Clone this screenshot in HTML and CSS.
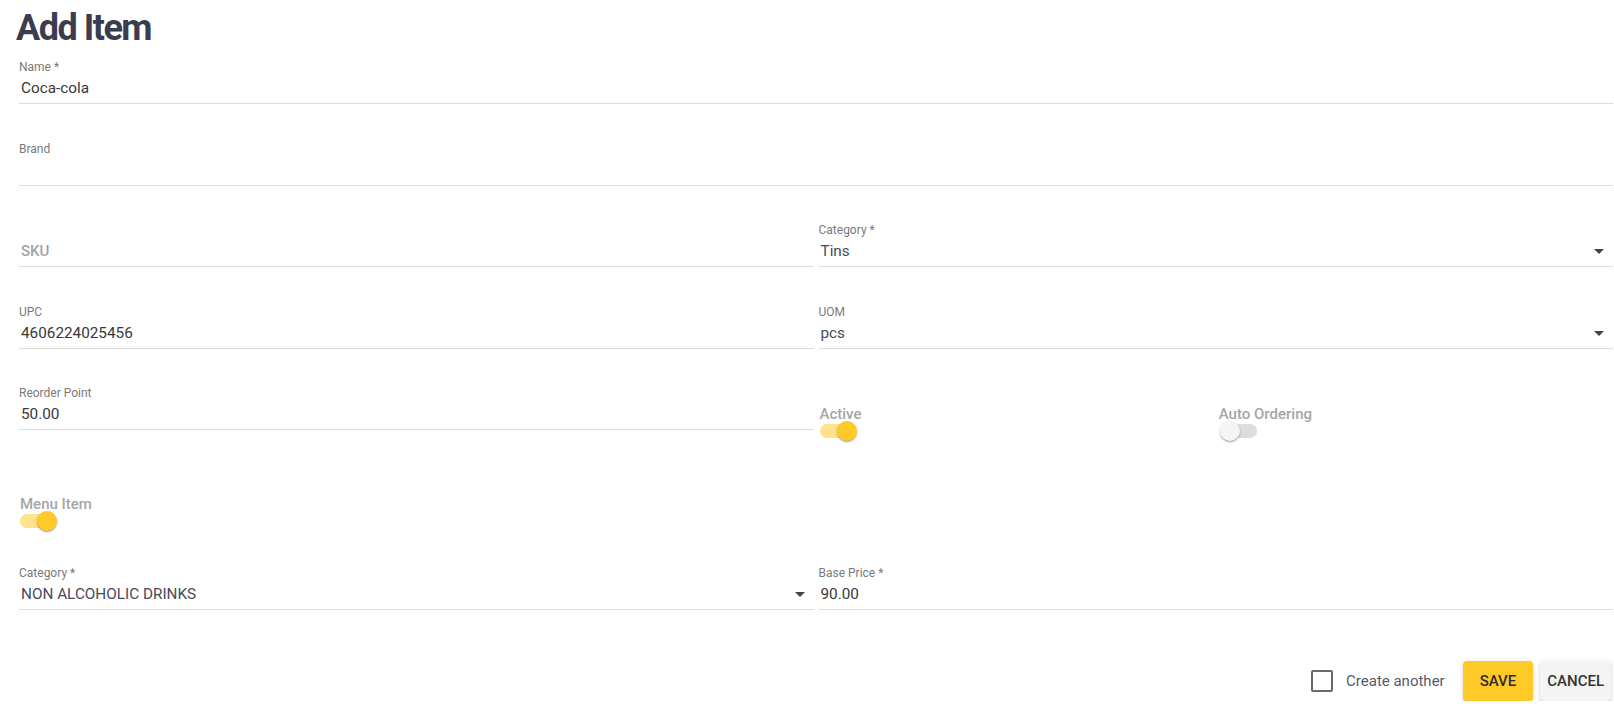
FILE: index.html
```html
<!DOCTYPE html>
<html lang="en">
<head>
<meta charset="utf-8">
<title>Add Item</title>
<link rel="stylesheet" href="styles.css">
</head>
<body>
<div class="page">
  <h1 class="title">Add Item</h1>
  <form class="form">
    <div class="field">
      <label class="label">Name *</label>
      <div class="value">Coca-cola</div>
    </div>
    <div class="field">
      <label class="label">Brand</label>
      <div class="value"></div>
    </div>
    <div class="row-2">
      <div class="field field--empty">
        <div class="value"><label class="placeholder">SKU</label></div>
      </div>
      <div class="field">
        <label class="label">Category *</label>
        <div class="value value--select"><span>Tins</span>
          <svg class="caret" viewBox="0 0 24 24" width="24" height="24"><path d="M7 10l5 5 5-5z"/></svg>
        </div>
      </div>
    </div>
    <div class="row-2">
      <div class="field">
        <label class="label">UPC</label>
        <div class="value">4606224025456</div>
      </div>
      <div class="field">
        <label class="label">UOM</label>
        <div class="value value--select"><span>pcs</span>
          <svg class="caret" viewBox="0 0 24 24" width="24" height="24"><path d="M7 10l5 5 5-5z"/></svg>
        </div>
      </div>
    </div>
    <div class="row-2">
      <div class="field">
        <label class="label">Reorder Point</label>
        <div class="value">50.00</div>
      </div>
      <div class="switch-pair">
        <div class="switch-group">
          <div class="switch-label">Active</div>
          <div class="switch on"><span class="thumb"></span></div>
        </div>
        <div class="switch-group switch-group--second">
          <div class="switch-label">Auto Ordering</div>
          <div class="switch"><span class="thumb"></span></div>
        </div>
      </div>
    </div>
    <div class="switch-row">
      <div class="switch-group">
        <div class="switch-label">Menu Item</div>
        <div class="switch on"><span class="thumb"></span></div>
      </div>
    </div>
    <div class="row-2">
      <div class="field">
        <label class="label">Category *</label>
        <div class="value value--select"><span>NON ALCOHOLIC DRINKS</span>
          <svg class="caret" viewBox="0 0 24 24" width="24" height="24"><path d="M7 10l5 5 5-5z"/></svg>
        </div>
      </div>
      <div class="field">
        <label class="label">Base Price *</label>
        <div class="value">90.00</div>
      </div>
    </div>
    <div class="actions">
      <label class="check"><span class="box"></span><span>Create another</span></label>
      <button type="button" class="btn btn-save">Save</button>
      <button type="button" class="btn btn-cancel">Cancel</button>
    </div>
  </form>
</div>
</body>
</html>
```

FILE: styles.css
```css
* { box-sizing: border-box; }

body {
  margin: 0;
  background: #ffffff;
  font-family: Roboto, "Noto Sans", "Liberation Sans", sans-serif;
}

.page {
  padding: 7px 1px 0 19px;
}

.title {
  margin: 0 0 11px -3px;
  font-size: 36px;
  line-height: 42px;
  font-weight: 700;
  letter-spacing: -1.5px;
  color: #3a3d4f;
}

.form {
  display: flex;
  flex-direction: column;
  gap: 37.5px;
}

.row-2 {
  display: grid;
  grid-template-columns: 1fr 1fr;
  column-gap: 5px;
  align-items: start;
}

.field {
  border-bottom: 1px solid #dcdcdc;
}

.field--empty {
  padding-top: 14px;
}

.label {
  display: block;
  font-size: 12px;
  line-height: 14px;
  color: #7a7a7a;
}

.value {
  display: flex;
  align-items: center;
  justify-content: space-between;
  height: 29px;
  padding: 3px 0 4px 2px;
  font-size: 15.3px;
  line-height: 22px;
  color: #383838;
}

.value--select {
  color: #474a5c;
}

.caret {
  flex: none;
  margin: -1px 2px -1px 0;
  fill: #3f4255;
}

.placeholder {
  font-size: 15px;
  font-weight: 500;
  color: #a3a3a3;
}

.switch-pair {
  display: grid;
  grid-template-columns: 1fr 1fr;
  padding-top: 18px;
}

.switch-group--second {
  padding-left: 2px;
}

.switch-group--second .switch {
  margin-left: 5px;
}

.switch-row {
  padding-top: 18px;
  padding-bottom: 1px;
}

.switch-label {
  font-size: 15px;
  line-height: 20px;
  font-weight: 500;
  color: #a6a6a6;
  padding-left: 1px;
}

.switch {
  position: relative;
  width: 34px;
  height: 14px;
  margin-left: 1px;
  border-radius: 7px;
  background: #dddddd;
}

.switch.on {
  background: #ffe28a;
}

.thumb {
  position: absolute;
  top: -3px;
  left: -3px;
  width: 20px;
  height: 20px;
  border-radius: 50%;
  background: #f5f5f5;
  box-shadow: 0 1px 3px 0 rgba(0,0,0,0.2), 0 1px 1px 0 rgba(0,0,0,0.14), 0 2px 1px -1px rgba(0,0,0,0.12);
}

.switch.on .thumb {
  left: 17px;
  background: #ffca28;
}

.actions {
  display: flex;
  justify-content: flex-end;
  align-items: center;
  margin-top: 13.5px;
  padding-right: 2px;
}

.check {
  display: flex;
  align-items: center;
  gap: 13px;
  margin-right: 18px;
  font-size: 15px;
  color: #555a6b;
}

.box {
  width: 22px;
  height: 22px;
  border: 2px solid #6a6a6a;
  border-radius: 2px;
}

.btn {
  height: 40px;
  border: 0;
  border-radius: 4px;
  font-family: Roboto, "Noto Sans", sans-serif;
  font-size: 15px;
  font-weight: 500;
  text-transform: uppercase;
  cursor: pointer;
  box-shadow: 0 3px 1px -2px rgba(0,0,0,0.2), 0 2px 2px 0 rgba(0,0,0,0.14), 0 1px 5px 0 rgba(0,0,0,0.12);
}

.btn-save {
  padding: 0 17px;
  background: #ffca28;
  color: #2b2b2b;
}

.btn-cancel {
  margin-left: 7px;
  padding: 0 7px;
  background: #f4f4f4;
  color: #333333;
}
```
